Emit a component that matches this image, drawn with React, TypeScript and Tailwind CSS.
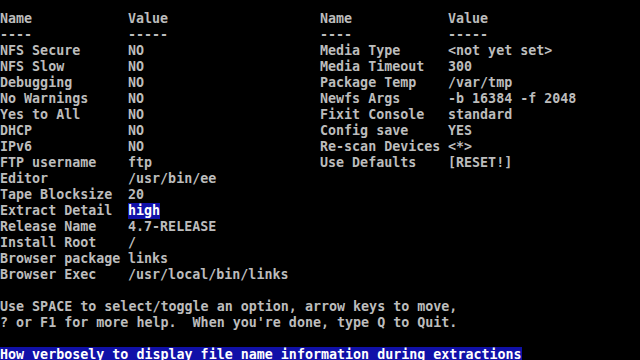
import React from 'react';

type Row = [string, React.ReactNode, string, string];

const Hi: React.FC<{ children: React.ReactNode }> = ({ children }) => (
  <span className="inline-block h-4 bg-[#1010a8] text-white">{children}</span>
);

const rows: Row[] = [
  ['Name', 'Value', 'Name', 'Value'],
  ['----', '-----', '----', '-----'],
  ['NFS Secure', 'NO', 'Media Type', '<not yet set>'],
  ['NFS Slow', 'NO', 'Media Timeout', '300'],
  ['Debugging', 'NO', 'Package Temp', '/var/tmp'],
  ['No Warnings', 'NO', 'Newfs Args', '-b 16384 -f 2048'],
  ['Yes to All', 'NO', 'Fixit Console', 'standard'],
  ['DHCP', 'NO', 'Config save', 'YES'],
  ['IPv6', 'NO', 'Re-scan Devices', '<*>'],
  ['FTP username', 'ftp', 'Use Defaults', '[RESET!]'],
  ['Editor', '/usr/bin/ee', '', ''],
  ['Tape Blocksize', '20', '', ''],
  ['Extract Detail', <Hi key="h">high</Hi>, '', ''],
  ['Release Name', '4.7-RELEASE', '', ''],
  ['Install Root', '/', '', ''],
  ['Browser package', 'links', '', ''],
  ['Browser Exec', '/usr/local/bin/links', '', ''],
];

const App: React.FC = () => {
  return (
    <div
      className="w-[640px] h-[360px] overflow-hidden bg-black pt-[11px] text-[#bcbcbc] text-[13.33px] leading-4 font-bold whitespace-pre"
      style={{ fontFamily: '"DejaVu Sans Mono", "Liberation Mono", monospace' }}
    >
      {rows.map((r, i) => (
        <div key={i} className="flex h-4">
          <div className="w-32 shrink-0">{r[0]}</div>
          <div className="w-48 shrink-0">{r[1]}</div>
          <div className="w-32 shrink-0">{r[2]}</div>
          <div className="flex-1">{r[3]}</div>
        </div>
      ))}
      <div className="h-4" />
      <div className="h-4">Use SPACE to select/toggle an option, arrow keys to move,</div>
      <div className="h-4">? or F1 for more help.  When you're done, type Q to Quit.</div>
      <div className="h-4" />
      <div className="h-4">
        <Hi>How verbosely to display file name information during extractions</Hi>
      </div>
    </div>
  );
};

export default App;
